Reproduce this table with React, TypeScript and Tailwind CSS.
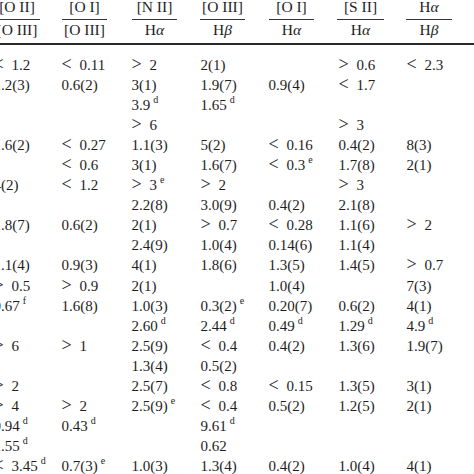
import React from "react"

type Frac = { num: React.ReactNode; den: React.ReactNode; shift: string; width: string }

const Ha = (
  <>
    H<i>α</i>
  </>
)
const Hb = (
  <>
    H<i>β</i>
  </>
)

const headers: Frac[] = [
  { num: "[O II]", den: "[O III]", shift: "ml-0", width: "w-[46px]" },
  { num: "[O I]", den: "[O III]", shift: "ml-0", width: "w-[45px]" },
  { num: "[N II]", den: Ha, shift: "ml-0", width: "w-[45px]" },
  { num: "[O III]", den: Hb, shift: "-ml-px", width: "w-[45px]" },
  { num: "[O I]", den: Ha, shift: "ml-0", width: "w-[45px]" },
  { num: "[S II]", den: Ha, shift: "-ml-[2px]", width: "w-[47px]" },
  { num: Ha, den: Hb, shift: "-ml-px", width: "w-[46px]" },
]

// one entry per table row, seven columns each; a trailing " d" etc. is a footnote mark
const rows: string[][] = [
  ["< 1.2", "< 0.11", "> 2", "2(1)", "", "> 0.6", "< 2.3"],
  ["1.2(3)", "0.6(2)", "3(1)", "1.9(7)", "0.9(4)", "< 1.7", ""],
  ["", "", "3.9 d", "1.65 d", "", "", ""],
  ["", "", "> 6", "", "", "> 3", ""],
  ["1.6(2)", "< 0.27", "1.1(3)", "5(2)", "< 0.16", "0.4(2)", "8(3)"],
  ["", "< 0.6", "3(1)", "1.6(7)", "< 0.3 e", "1.7(8)", "2(1)"],
  ["4(2)", "< 1.2", "> 3 e", "> 2", "", "> 3", ""],
  ["", "", "2.2(8)", "3.0(9)", "0.4(2)", "2.1(8)", ""],
  ["1.8(7)", "0.6(2)", "2(1)", "> 0.7", "< 0.28", "1.1(6)", "> 2"],
  ["", "", "2.4(9)", "1.0(4)", "0.14(6)", "1.1(4)", ""],
  ["1.1(4)", "0.9(3)", "4(1)", "1.8(6)", "1.3(5)", "1.4(5)", "> 0.7"],
  ["> 0.5", "> 0.9", "2(1)", "", "1.0(4)", "", "7(3)"],
  ["0.67 f", "1.6(8)", "1.0(3)", "0.3(2) e", "0.20(7)", "0.6(2)", "4(1)"],
  ["", "", "2.60 d", "2.44 d", "0.49 d", "1.29 d", "4.9 d"],
  ["> 6", "> 1", "2.5(9)", "< 0.4", "0.4(2)", "1.3(6)", "1.9(7)"],
  ["", "", "1.3(4)", "0.5(2)", "", "", ""],
  ["> 2", "", "2.5(7)", "< 0.8", "< 0.15", "1.3(5)", "3(1)"],
  ["> 4", "> 2", "2.5(9) e", "< 0.4", "0.5(2)", "1.2(5)", "2(1)"],
  ["0.94 d", "0.43 d", "", "9.61 d", "", "", ""],
  ["1.55 d", "", "", "0.62", "", "", ""],
  ["< 3.45 d", "0.7(3) e", "1.0(3)", "1.3(4)", "0.4(2)", "1.0(4)", "4(1)"],
]

function Cell({ value }: { value: string }) {
  if (!value) return <div className="h-[20.1px]" />
  let rel = ""
  let rest = value
  if (rest.startsWith("< ") || rest.startsWith("> ")) {
    rel = rest[0]
    rest = rest.slice(2)
  }
  const parts = rest.split(" ")
  const num = parts[0]
  const mark = parts[1]
  return (
    <div className="h-[20.1px] whitespace-nowrap leading-[20.1px]">
      {rel && <span className="inline-block w-[18px] text-[18px] leading-[0]">{rel}</span>}
      {num}
      {mark && <sup className="-top-[7px] ml-[3px] text-[10px]">{mark}</sup>}
    </div>
  )
}

const grid = "grid grid-cols-[68px_70px_69px_68px_70px_68px_80px]"

export default function App() {
  return (
    <div
      className="h-[474px] w-[474px] overflow-hidden bg-white text-[15px] text-[#1e1e1e]"
      style={{ fontFamily: '"Liberation Serif", "Times New Roman", serif' }}
    >
      {/* column headings, line ratios */}
      <div className={`${grid} -ml-[6px]`}>
        {headers.map((h, i) => (
          <div key={i} className={`flex flex-col items-center ${h.shift} ${h.width}`}>
            <div className="-mt-[1px] w-full border-b border-[#333] pb-[5px] text-center text-[15.5px] leading-[15px] whitespace-nowrap">
              {h.num}
            </div>
            <div className="pt-[1.5px] text-center text-[15.5px] leading-[15px] whitespace-nowrap">{h.den}</div>
          </div>
        ))}
      </div>

      <div className="mt-[6.5px] border-t-2 border-[#2a2a2a]" />

      <div className={`${grid} -ml-[6.5px] mt-[9.5px]`}>
        {rows.map((r, ri) => r.map((v, ci) => <Cell key={`${ri}-${ci}`} value={v} />))}
      </div>
    </div>
  )
}
